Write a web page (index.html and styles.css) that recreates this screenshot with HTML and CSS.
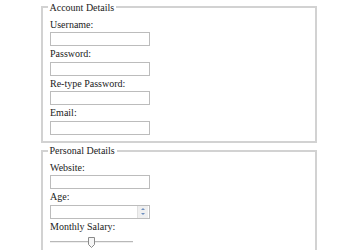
FILE: index.html
```html
<!DOCTYPE html>
<html>
<head>
<meta charset="utf-8">
<link rel="stylesheet" href="styles.css">
</head>
<body>
<form class="form">
  <fieldset class="group">
    <legend class="group-title">Account Details</legend>
    <div class="field">
      <label class="field-label">Username:</label>
      <input class="text-input" type="text">
    </div>
    <div class="field">
      <label class="field-label">Password:</label>
      <input class="text-input" type="password">
    </div>
    <div class="field">
      <label class="field-label">Re-type Password:</label>
      <input class="text-input" type="password">
    </div>
    <div class="field">
      <label class="field-label">Email:</label>
      <input class="text-input" type="text">
    </div>
  </fieldset>
  <fieldset class="group group-last">
    <legend class="group-title">Personal Details</legend>
    <div class="field">
      <label class="field-label">Website:</label>
      <input class="text-input" type="text">
    </div>
    <div class="field">
      <label class="field-label">Age:</label>
      <div class="numbox">
        <input class="num-input" type="text">
        <span class="spin">
          <span class="arrow arrow-up"></span>
          <span class="arrow arrow-down"></span>
        </span>
      </div>
    </div>
    <div class="field">
      <label class="field-label">Monthly Salary:</label>
      <div class="slider">
        <span class="track"></span>
        <svg class="thumb" width="7" height="11" viewBox="0 0 7 11">
          <path d="M0.5 0.5 H6.5 V7.5 L3.5 10.5 L0.5 7.5 Z" fill="#f6f6f6" stroke="#8a8a8a" stroke-width="1"/>
        </svg>
        <span class="track"></span>
      </div>
    </div>
  </fieldset>
</form>
</body>
</html>
```
FILE: styles.css
```css
html, body {
  margin: 0;
  padding: 0;
  background: #ffffff;
}
body {
  font-family: "Liberation Serif", "Times New Roman", serif;
  font-size: 10px;
  color: #222222;
  overflow: hidden;
}
.form {
  width: 280px;
  margin: 1.5px auto 0;
}
.group {
  margin: 0 2px 2px;
  padding: 3.5px 7.5px 6.25px;
  border: 2px solid #d2d2d2;
  min-width: 0;
}
.group-title {
  padding: 0 2px;
  margin-left: -2.5px;
  line-height: 11.5px;
  color: #222222;
}
.field {
  display: flex;
  flex-direction: column;
  align-items: flex-start;
}
.field-label {
  display: block;
  line-height: 15.5px;
}
.text-input {
  display: block;
  box-sizing: border-box;
  width: 100px;
  height: 14px;
  margin: 0;
  padding: 0;
  border: 1px solid #bcbcbc;
  background: #ffffff;
  font: inherit;
}
.numbox {
  display: flex;
  box-sizing: border-box;
  width: 100px;
  height: 14px;
  border: 1px solid #bcbcbc;
  background: #ffffff;
}
.num-input {
  flex: 1;
  min-width: 0;
  margin: 0;
  padding: 0;
  border: none;
  background: transparent;
  font: inherit;
}
.spin {
  display: flex;
  flex-direction: column;
  align-items: center;
  justify-content: center;
  gap: 3px;
  width: 10px;
  margin: 0 1px 0 0;
  background: #efefef;
  border-left: 1px solid #e0e0e0;
}
.arrow {
  width: 0;
  height: 0;
  border-left: 2px solid transparent;
  border-right: 2px solid transparent;
}
.arrow-up {
  border-bottom: 2px solid #6f8fbf;
}
.arrow-down {
  border-top: 2px solid #6f8fbf;
}
.slider {
  display: flex;
  align-items: center;
  width: 83px;
  height: 12px;
  margin-top: 2px;
}
.track {
  flex: 1;
  height: 1px;
  border-top: 1px solid #b8b8b8;
  background: #eeeeee;
}
.thumb {
  display: block;
  flex: none;
}
```
